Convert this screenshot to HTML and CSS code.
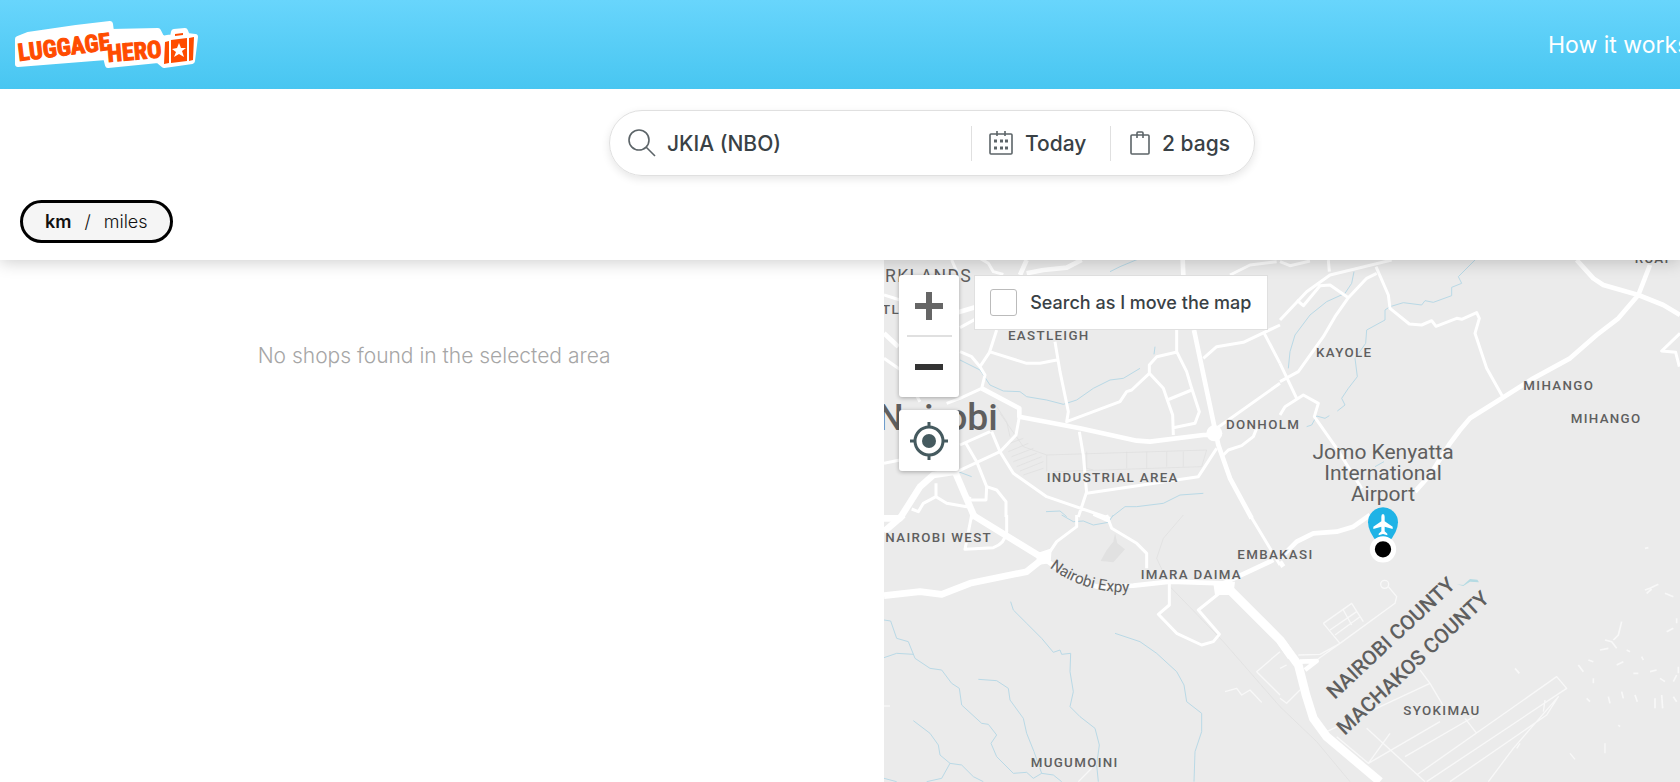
FILE: index.html
```html
<!DOCTYPE html>
<html lang="en">
<head>
    <meta charset="UTF-8">
    <meta name="viewport" content="width=device-width, initial-scale=1.0">
    <title>LuggageHero</title>
    <link rel="stylesheet" href="styles.css">
</head>
<body>

    <header class="header">
        <a href="#" class="logo" aria-label="LuggageHero">
            <svg width="190" height="56" viewBox="10 17 190 56">
                <path class="logo-back" d="M18 39 L28 35 L76 28 L110 24 L111 32 L158 31 L162 39 L173 37 L174 32 L185 31 L187 36 L195 37 L192 61 L164 65 L158 60 L108 65 L106 57 L18 64 Z"/>
                <text class="logo-text" transform="translate(19 61) rotate(-7)">LUGGAGE</text>
                <text class="logo-text" transform="translate(108 62) rotate(-5)">HERO</text>
                <path class="logo-case" d="M165 42 L169 41 V63 L164 64 Z M171 40 L187 38 V61 L171 63 Z M189 38 L194 37 L193 60 L189 61 Z M175 34 L183 33 V35 L175 36 Z"/>
                <path fill="#fff" d="M179 43 L181 48 L186 48 L182 51 L184 57 L179 54 L174 57 L176 52 L172 49 L177 48 Z"/>
            </svg>
        </a>
        <nav class="nav">
            <a href="#">How it works</a>
        </nav>
    </header>

    <section class="toolbar">
        <form class="search">
            <label class="search-place">
                <svg width="28" height="28" viewBox="0 0 28 28" class="icon">
                    <circle cx="11" cy="11" r="10"/>
                    <path d="M18 18 L27 27"/>
                </svg>
                <input type="text" value="JKIA (NBO)" aria-label="Location">
            </label>
            <button type="button" class="search-date">
                <svg width="24" height="25" viewBox="0 0 24 25" class="icon">
                    <rect x="1" y="3" width="22" height="20" rx="1"/>
                    <path d="M8 0 V5 M16 0 V5"/>
                    <path class="dots" d="M5 10 h3 M11 10 h3 M16 10 h3 M5 17 h3 M11 17 h3 M16 17 h3"/>
                </svg>
                Today
            </button>
            <button type="button" class="search-bags">
                <svg width="20" height="25" viewBox="0 0 20 25" class="icon">
                    <rect x="1" y="4" width="18" height="19" rx="1"/>
                    <path d="M7 7 V2 Q7 1 8 1 H12 Q13 1 13 2 V7"/>
                </svg>
                2 bags
            </button>
        </form>
        <button type="button" class="units"><b>km</b><span>/</span><span>miles</span></button>
    </section>

    <main class="content">
        <section class="shops">
            <p>No shops found in the selected area</p>
        </section>

        <section class="map">
            <svg class="map-canvas" viewBox="0 0 2388 1566" preserveAspectRatio="xMinYMin slice">
                <!-- north west -->
                <g transform="translate(-12 -15)">
                    <path class="block" d="M360 475 L430 575 L500 600 L980 585 L965 635 L520 650 M500 600 V650 M620 590 V640 L640 645 M740 590 V640 M800 590 V640 M860 590 V635 M910 590 V635 M375 570 L430 550 M385 590 L445 565 M395 605 L460 580 M400 620 L470 595 M410 635 L485 605 M420 648 L490 620 M430 660 L490 640 M340 440 L380 500 L390 545"/>
                    <path class="river" d="M240 315 L300 345 L330 390 L370 408 L420 410 L440 425 L500 435 L550 448 L590 435 L640 400 L690 375 L730 370 L780 340 M825 275 L822 298 M690 50 L720 35 L775 12 M498 770 L540 768 L560 785 M695 786 L735 755 L770 755 L850 745 L900 720 L970 715 M235 650 L275 665"/>
                    <path class="road" d="M300 10 L325 25 L340 50 L370 58 M215 15 L235 60 M12 120 L60 135 M240 218 L300 185 M350 225 L328 293 L300 335 L315 360 L305 400 M240 290 L275 305 L300 335 M328 290 L440 325 L480 325 L530 315 M525 260 L540 350 L565 470 L560 500 L720 440 L740 410 L755 405 L808 355 L808 330 L830 305 L888 292 M890 225 V290 L920 350 L935 400 L958 470 L945 505 L880 518 M808 355 L850 400 L862 435 L878 480 L880 540 M862 435 L935 405 M305 400 L240 430 L200 445 M970 310 L1010 275 L1090 262 L1200 210 M1150 230 L1200 325 M1010 520 L1200 385 M1030 600 L1045 585 L1085 572 L1120 545 L1130 520 M1010 580 L955 665 L620 715 L610 600 L598 530 M620 710 L595 786 M360 590 L400 655 L500 725 L690 790 M418 485 L408 540 L360 590 L220 655 M255 560 L290 620 L320 695 L318 735 L265 735 M320 695 L350 705 L378 740 V786 M335 530 L360 590 M240 570 L330 530 M168 685 L168 725 L200 745 L260 755 L270 725 M168 725 L130 745 L115 770 L95 762 M12 310 L70 350 L120 440 M12 625 L60 615 M1050 60 L1110 30 L1190 20"/>
                    <path class="road wide" d="M420 60 L440 15 M440 55 L490 45 L560 38 L605 15 M235 172 L290 155 M12 235 L55 275 M305 400 L418 460 L418 485 L600 520 L770 557 L810 560 L970 540 L1005 540 M908 15 L910 60 M942 225 L1000 500 L1015 570 L1050 670 L1115 790"/>
                    <path class="road main" d="M225 650 L160 660 L120 695 L60 790 L12 790 M225 650 L285 790"/>
                    <circle cx="1003" cy="535" r="24" fill="#fff"/>
                </g>
                <!-- north east -->
                <g transform="translate(1188 -15)">
                    <path class="river" d="M222 50 L215 85 L195 115 L140 140 L90 180 L45 240 L30 290 L25 340 M585 15 L535 65 L545 85 L515 97 L515 122 L460 142 L435 137 L425 150 L370 143 L330 155 L315 165 L315 195 L260 225 L257 265 L225 310 L232 365 L205 400 L185 430 L195 450 L172 468 M148 482 L135 490 L110 483 L95 510 L80 515 M285 635 L312 620"/>
                    <path class="road" d="M145 15 L148 50 M0 195 L80 110 L150 60 L335 15 M50 135 L70 152 L120 92 L150 90 L205 128 M0 325 L50 430 M0 380 L55 350 L130 245 L165 185 L205 128 L260 70 L290 55 M288 35 L325 120 L330 160 L388 207 L425 210 L455 197 L468 214 L530 190 L545 193 L590 173 L598 190 L585 235 L620 340 L668 425 M0 480 L15 455 L70 420 L115 445 L103 485 L170 580 L245 700 M1200 235 L1145 288 L1187 292 L1198 335 M0 20 L30 32 L90 18"/>
                    <path class="road wide" d="M890 15 L940 70 L970 90 L1075 120 L1150 150 L1200 180 M1110 30 L1075 120 L1015 190 L950 240 L870 310 L760 370 L668 428 L570 490 L540 525 L510 565 L450 660 L405 710"/>
                </g>
                <!-- south west -->
                <g transform="translate(-12 765)">
                    <path fill="#e1e1e1" d="M662 138 L680 105 L700 80 L705 55 L712 85 L735 103 L700 142 Z"/>
                    <path class="rail" d="M910 0 L850 70 L830 130 L870 215 L1030 380 L1200 575"/>
                    <path class="river" d="M545 0 L580 20 L610 18 L640 30 L685 22 L700 0 M392 260 L400 285 L440 325 L485 370 L520 412 L540 405 L545 418 L572 415 L570 470 L580 530 L570 575 L600 605 L645 640 L658 690 L650 750 L655 800 M12 315 L32 318 L50 370 L85 380 L105 430 L150 460 L185 465 L215 505 L238 520 L245 570 L305 625 L325 628 L350 660 L333 685 L350 725 L400 775 L440 772 L460 790 L485 775 L520 780 L545 800 M12 428 L50 415 L100 418 M295 493 L350 497 L385 520 L390 555 L430 610 L440 655 L462 710 L485 775 M100 617 L150 655 L175 690 L180 720 L210 745 L245 750 L280 785 L310 800 M210 745 L185 790 L140 800 M12 790 L50 800 M705 355 L780 380 L830 415 L890 470 L912 510 L920 560 L965 595 L965 650 L945 710 L942 800"/>
                    <path class="road" d="M380 0 V50 Q375 85 340 98 L255 103 L275 0 M590 0 V35 L530 80 L510 110 M680 0 L695 40 L770 85 L800 115 L800 160 M640 -2 L690 20 M868 200 V270 L835 298 L890 355 L965 390 L1000 380 L1018 358 L955 285 L1030 225 M1110 0 L1200 150"/>
                    <path class="road thin" d="M1200 410 L1130 470 L1200 540 M1035 530 L1070 520 L1085 540 L1110 525 L1145 562 M12 573 H30 M595 800 L635 760"/>
                    <path class="road main" d="M278 0 L490 130 L440 170 L270 205 L185 238 L120 230 L12 242 M12 50 L70 0"/>
                    <path class="road wide" d="M490 130 L560 180 L650 215 L760 212 L870 200 L1030 205 L1180 135"/>
                    <path fill="#fff" d="M470 115 L515 100 L512 145 L470 150 Z M1000 205 L1065 200 L1060 240 L1005 240 Z"/>
                    <path class="road trunk" d="M1030 205 L1200 375 L1235 425"/>
                </g>
                <!-- south east -->
                <g transform="translate(1188 765)">
                    <path class="rail" d="M0 575 L110 680 L210 800"/>
                    <path class="road thin" d="M0 460 L20 450 M0 550 L20 565 L60 525 M130 325 L215 265 L250 320 M130 325 L180 385 M150 345 L230 290 M165 360 L240 305 M190 285 L215 330 M55 420 L120 418 L180 385 M110 435 L180 385 L345 265 L350 245 L325 215 M140 650 L450 505 M420 465 L450 505 L500 590 M260 640 L435 800 M265 745 L330 655 M170 665 L265 745 L480 620 M375 725 L590 600 M555 610 L590 655 M410 780 L830 485 L860 520 L440 800 M510 800 L800 600 L835 545 L700 700 L625 800 M790 590 L795 555 M710 700 L720 685 M870 715 L885 733 M975 685 V715"/>
                    <circle class="road thin" cx="314" cy="208" r="12"/>
                    <path class="specks" d="M1095 225 L1110 220 L1135 208 M1100 235 L1115 222 M1155 235 L1180 245 M975 375 L995 380 L1010 400 M1025 320 L1015 360 L1000 375 M960 405 L985 400 M1040 405 L1050 410 M895 450 L910 470 M925 435 L940 440 M940 490 V505 M985 545 L990 565 M1025 530 L1030 550 M1010 450 L1030 440 M1085 425 L1090 435 M1060 475 H1075 M1110 470 L1130 465 M1140 490 L1155 500 M1180 500 L1190 480 M1145 540 L1148 580 M1125 550 V580 M1180 545 L1190 560 M1160 350 L1180 340 M1190 310 V325 M1195 455 V475 M1095 100 L1105 98 M705 460 L718 475 M1015 630 L1020 635 M1065 540 L1072 560 M920 550 L930 560"/>
                    <path fill="#b5dbe3" d="M530 208 L550 210 L570 192 L592 194 L597 202 L570 200 L550 213 Z"/>
                    <path class="road trunk" d="M0 375 L55 450 L78 540 L100 610 L140 665 L300 800"/>
                    <path class="road wide" d="M60 440 L110 438 L75 465 M0 130 L50 80 L100 55 L170 50 L220 35 L270 0 M0 140 L10 155"/>
                </g>

                <g class="labels">
                    <text x="3" y="65" class="district big">RKLANDS</text>
                    <text x="-6" y="161" class="district">TLANDS</text>
                    <text x="372" y="239" class="district">EASTLEIGH</text>
                    <text x="1296" y="290" class="district">KAYOLE</text>
                    <text x="1918" y="389" class="district">MIHANGO</text>
                    <text x="2060" y="489" class="district">MIHANGO</text>
                    <text x="2252" y="9" class="district">RUAI</text>
                    <text x="1026" y="506" class="district">DONHOLM</text>
                    <text x="488" y="666" class="district">INDUSTRIAL AREA</text>
                    <text x="4" y="846" class="district">NAIROBI WEST</text>
                    <text x="1060" y="898" class="district">EMBAKASI</text>
                    <text x="770" y="958" class="district">IMARA DAIMA</text>
                    <text x="440" y="1521" class="district">MUGUMOINI</text>
                    <text x="1558" y="1364" class="district">SYOKIMAU</text>
                    <text x="-20" y="509" class="city">Nairobi</text>
                    <text x="1497" y="598" class="airport">Jomo Kenyatta</text>
                    <text x="1497" y="661" class="airport">International</text>
                    <text x="1497" y="724" class="airport">Airport</text>
                    <text class="county" transform="translate(1352 1320) rotate(-43)">NAIROBI COUNTY</text>
                    <text class="county" transform="translate(1382 1428) rotate(-43)">MACHAKOS COUNTY</text>
                    <path id="expressway" fill="none" d="M497 922 Q610 1010 780 994"/>
                    <text class="street"><textPath href="#expressway">Nairobi Expy</textPath></text>
                </g>

                <!-- airport pin and selected location -->
                <path fill="#1fb3e6" d="M1497 742 A45 45 0 0 1 1542 787 Q1542 815 1512 850 H1482 Q1452 815 1452 787 A45 45 0 0 1 1497 742 Z"/>
                <path fill="#fff" d="M1497 762 Q1502 762 1502 770 V784 L1526 800 V807 L1502 800 V814 L1510 821 V826 L1497 822 L1484 826 V821 L1492 814 V800 L1468 807 V800 L1492 784 V770 Q1492 762 1497 762 Z"/>
                <circle cx="1497" cy="868" r="32" fill="#000" stroke="#fff" stroke-width="15"/>
            </svg>

            <div class="map-controls">
                <div class="zoom">
                    <button type="button" aria-label="Zoom in">
                        <svg width="28" height="28" viewBox="0 0 28 28"><path fill="#666" d="M11 0 H17 V11 H28 V17 H17 V28 H11 V17 H0 V11 H11 Z"/></svg>
                    </button>
                    <button type="button" aria-label="Zoom out">
                        <svg width="28" height="28" viewBox="0 0 28 28"><path fill="#333" d="M0 11 H28 V17 H0 Z"/></svg>
                    </button>
                </div>
                <button type="button" class="locate" aria-label="My location">
                    <svg width="38" height="38" viewBox="0 0 38 38" fill="none" stroke="#455a5f" stroke-width="3">
                        <circle cx="19" cy="19" r="14"/>
                        <circle cx="19" cy="19" r="7" fill="#455a5f" stroke="none"/>
                        <path d="M19 0 V5 M19 33 V38 M0 19 H5 M33 19 H38"/>
                    </svg>
                </button>
            </div>
            <label class="map-search"><input type="checkbox">Search as I move the map</label>
        </section>
    </main>

</body>
</html>
```
FILE: styles.css
```css
* {
    box-sizing: border-box;
}

body {
    margin: 0;
    height: 100vh;
    display: flex;
    flex-direction: column;
    overflow: hidden;
    background-color: #fff;
    color: #394145;
    font-family: Inter, "Open Sans", sans-serif;
}

button,
input {
    font: inherit;
    color: inherit;
}

button {
    border: none;
    background: none;
    cursor: pointer;
}

.header {
    position: relative;
    z-index: 2;
    height: 89px;
    flex: none;
    display: flex;
    justify-content: space-between;
    align-items: center;
    overflow: hidden;
    padding-left: 10px;
    background: linear-gradient(#68d5fc, #48c6f1);
}

.logo svg {
    display: block;
}

.logo-back {
    fill: #fff;
    stroke: #fff;
    stroke-width: 6;
    stroke-linejoin: round;
}

.logo-text {
    font-family: "Liberation Sans Narrow", "Roboto Condensed", "Liberation Sans", sans-serif;
    font-size: 24px;
    font-weight: bold;
    fill: #ff4c00;
    stroke: #ff4c00;
    stroke-width: 1;
}

.logo-case {
    fill: #ff4c00;
}

/* the menu runs on past the right edge */
.nav {
    flex: 0 0 132px;
    min-width: 0;
    white-space: nowrap;
}

.nav a {
    color: #fff;
    font-size: 23px;
    text-decoration: none;
}

.toolbar {
    position: relative;
    z-index: 1;
    flex: none;
    padding: 21px 20px 17px;
    background-color: #fff;
    box-shadow: 0 2px 16px rgba(0, 0, 0, 0.2);
}

.search {
    display: flex;
    align-items: center;
    width: 646px;
    max-width: 100%;
    height: 66px;
    margin: 0 auto 24px;
    position: relative;
    left: 92px;
    padding: 0 24px 0 18px;
    border: 1px solid #e0e0e0;
    border-radius: 33px;
    box-shadow: 0 3px 8px rgba(0, 0, 0, 0.1);
    font-size: 21px;
    font-weight: 500;
}

.icon {
    flex: none;
    fill: none;
    stroke: #5c6468;
    stroke-width: 1.6;
}

.icon .dots {
    stroke-width: 3;
}

.search-place {
    flex: 1;
    min-width: 0;
    display: flex;
    align-items: center;
    gap: 11px;
}

.search-place input {
    flex: 1;
    min-width: 0;
    padding: 0;
    border: none;
    outline: none;
    background: none;
}

.search button {
    flex: none;
    display: flex;
    align-items: center;
    gap: 12px;
    height: 35px;
    padding: 0 0 0 19px;
    border-left: 1px solid #e0e0e0;
    white-space: nowrap;
}

.search .search-date {
    width: 139px;
    padding-left: 17px;
}

.units {
    display: flex;
    align-items: center;
    gap: 13px;
    height: 43px;
    padding: 0 22px;
    border: 3px solid #000;
    border-radius: 22px;
    background-color: #f5f5f5;
    color: #111;
    font-size: 18px;
    font-weight: 300;
}

.units b {
    font-weight: 600;
}

.content {
    flex: 1;
    min-height: 0;
    display: grid;
    grid-template-columns: 10fr 9fr;
}

.shops {
    padding: 83px 16px 0 0;
    text-align: center;
    color: #a6a6a6;
    font-size: 21px;
    font-weight: 300;
}

.shops p {
    margin: 0;
}

.map {
    position: relative;
    overflow: hidden;
    background-color: #ebebeb;
}

.map-canvas {
    display: block;
    width: 100%;
    height: 100%;
}

.road {
    fill: none;
    stroke: #fff;
    stroke-width: 9;
    stroke-linejoin: round;
}

.road.thin {
    stroke-width: 4;
    stroke: #f8f8f8;
}

.road.wide {
    stroke-width: 14;
}

.road.main {
    stroke-width: 20;
}

.road.trunk {
    stroke-width: 26;
}

.river {
    fill: none;
    stroke: #b9d9e6;
    stroke-width: 3;
    stroke-linejoin: round;
}

.block,
.rail {
    fill: none;
    stroke: #dedede;
    stroke-width: 2;
}

.specks {
    fill: none;
    stroke: #f8f8f8;
    stroke-width: 5;
}

.labels {
    font-family: Roboto, sans-serif;
    fill: #5f5f5f;
    stroke: #ebebeb;
    stroke-width: 4;
    paint-order: stroke;
}

.district {
    font-size: 40px;
    font-weight: 500;
    letter-spacing: 4px;
}

.district.big {
    font-size: 53px;
    font-weight: 400;
}

.city {
    font-size: 112px;
    font-weight: 500;
}

.airport {
    font-size: 63px;
    text-anchor: middle;
}

.county {
    font-size: 62px;
    font-weight: 500;
}

.street {
    font-size: 46px;
}

#expressway {
    stroke: none;
}

.map-controls {
    position: absolute;
    top: 15px;
    left: 15px;
    width: 60px;
    display: flex;
    flex-direction: column;
    gap: 13px;
}

.zoom,
.locate {
    background-color: #fff;
    border-radius: 3px;
    box-shadow: 0 1px 4px rgba(0, 0, 0, 0.3);
}

.zoom button,
.locate {
    display: flex;
    justify-content: center;
    align-items: center;
    width: 100%;
    height: 61px;
    padding: 0;
}

.zoom button + button::before {
    content: "";
    position: absolute;
    top: 60px;
    width: 45px;
    height: 2px;
    background-color: #e0e0e0;
}

.map-search {
    position: absolute;
    top: 15px;
    left: 90px;
    display: flex;
    align-items: center;
    gap: 13px;
    height: 55px;
    padding: 0 16px 0 15px;
    border: 1px solid #e0e0e0;
    background-color: #fff;
    font-size: 18px;
    font-weight: 500;
    white-space: nowrap;
}

.map-search input {
    appearance: none;
    width: 27px;
    height: 27px;
    margin: 0;
    border: 1px solid #bbb;
    border-radius: 3px;
    background-color: #fff;
}
```
